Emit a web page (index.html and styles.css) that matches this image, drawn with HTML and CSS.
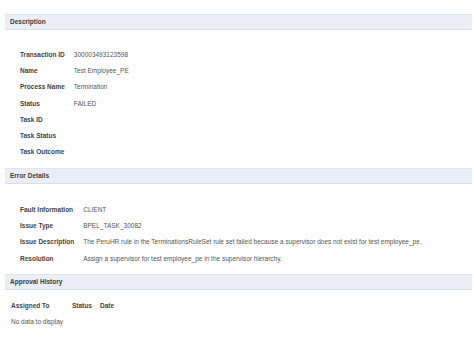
FILE: index.html
```html
<!DOCTYPE html>
<html lang="en">
  <head>
    <meta charset="UTF-8" />
    <title>Transaction Details</title>
    <link rel="stylesheet" href="styles.css">
  </head>
  <body>
    <div class="page">
      <div class="bar">Description</div>
      <div class="fields first">
        <div class="label">Transaction ID</div><div class="value">300003493123598</div>
        <div class="label">Name</div><div class="value">Test Employee_PE</div>
        <div class="label">Process Name</div><div class="value">Termination</div>
        <div class="label">Status</div><div class="value">FAILED</div>
        <div class="label">Task ID</div><div class="value"></div>
        <div class="label">Task Status</div><div class="value"></div>
        <div class="label">Task Outcome</div><div class="value"></div>
      </div>

      <div class="bar">Error Details</div>
      <div class="fields">
        <div class="label">Fault Information</div><div class="value">CLIENT</div>
        <div class="label">Issue Type</div><div class="value">BPEL_TASK_30082</div>
        <div class="label">Issue Description</div><div class="value">The PeruHR rule in the TerminationsRuleSet rule set failed because a supervisor does not exist for test employee_pe.</div>
        <div class="label">Resolution</div><div class="value">Assign a supervisor for test employee_pe in the supervisor hierarchy.</div>
      </div>

      <div class="bar">Approval History</div>
      <div class="history">
        <div class="history-head">
          <span class="col-assigned">Assigned To</span>
          <span class="col-status">Status</span>
          <span>Date</span>
        </div>
        <div class="empty">No data to display</div>
      </div>
    </div>
  </body>
</html>
```

FILE: styles.css
```css
body {
  margin: 0;
  background: #fff;
  font-family: "Liberation Sans", Arial, sans-serif;
  font-size: 6.5px;
  color: #444;
}

.page {
  padding: 14px 2px 0 5px;
}

.bar {
  height: 14px;
  line-height: 14px;
  padding-left: 5px;
  background: #ebeef6;
  border-top: 1px solid #e1e4ea;
  border-bottom: 1px solid #d9dde5;
  font-weight: bold;
  color: #3c3c3c;
}

.fields {
  display: grid;
  grid-template-columns: auto 1fr;
  column-gap: 9px;
  grid-auto-rows: 16.3px;
  align-items: center;
  padding: 17px 0 8px 15px;
}

.fields.first {
  padding-top: 16px;
}

.label {
  font-weight: bold;
  color: #444;
}

.value {
  color: #555;
}

.history {
  padding: 8px 0 0 6px;
}

.history-head,
.empty {
  height: 16px;
  line-height: 16px;
}

.history-head {
  display: flex;
  font-weight: bold;
  color: #444;
}

.col-assigned {
  width: 61px;
}

.col-status {
  width: 28px;
}

.empty {
  color: #555;
}
```
